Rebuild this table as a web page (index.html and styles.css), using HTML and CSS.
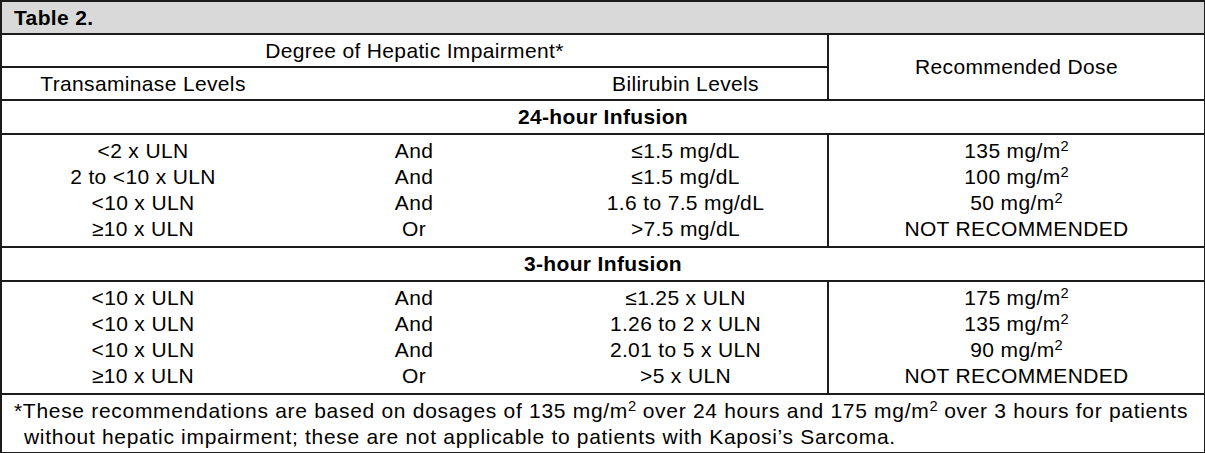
FILE: index.html
```html
<!DOCTYPE html>
<html>
<head>
<meta charset="utf-8">
<link rel="stylesheet" href="styles.css">
</head>
<body>
<table class="tbl">
  <colgroup>
    <col class="c1"><col class="c2"><col class="c3"><col class="c4">
  </colgroup>
  <tr class="title"><td colspan="4">Table 2.</td></tr>
  <tr class="hdr hdr1">
    <td colspan="3" class="center">Degree of Hepatic Impairment*</td>
    <td rowspan="2" class="center dose">Recommended Dose</td>
  </tr>
  <tr class="hdr hdr2">
    <td class="center">Transaminase Levels</td>
    <td></td>
    <td class="center">Bilirubin Levels</td>
  </tr>
  <tr class="sec"><td colspan="4">24-hour Infusion</td></tr>
  <tr class="row first"><td>&lt;2 x ULN</td><td>And</td><td>&le;1.5 mg/dL</td><td class="dose">135 mg/m<sup>2</sup></td></tr>
  <tr class="row"><td>2 to &lt;10 x ULN</td><td>And</td><td>&le;1.5 mg/dL</td><td class="dose">100 mg/m<sup>2</sup></td></tr>
  <tr class="row"><td>&lt;10 x ULN</td><td>And</td><td>1.6 to 7.5 mg/dL</td><td class="dose">50 mg/m<sup>2</sup></td></tr>
  <tr class="row last"><td>&ge;10 x ULN</td><td>Or</td><td>&gt;7.5 mg/dL</td><td class="dose">NOT RECOMMENDED</td></tr>
  <tr class="sec"><td colspan="4">3-hour Infusion</td></tr>
  <tr class="row first"><td>&lt;10 x ULN</td><td>And</td><td>&le;1.25 x ULN</td><td class="dose">175 mg/m<sup>2</sup></td></tr>
  <tr class="row"><td>&lt;10 x ULN</td><td>And</td><td>1.26 to 2 x ULN</td><td class="dose">135 mg/m<sup>2</sup></td></tr>
  <tr class="row"><td>&lt;10 x ULN</td><td>And</td><td>2.01 to 5 x ULN</td><td class="dose">90 mg/m<sup>2</sup></td></tr>
  <tr class="row last"><td>&ge;10 x ULN</td><td>Or</td><td>&gt;5 x ULN</td><td class="dose">NOT RECOMMENDED</td></tr>
  <tr class="foot"><td colspan="4"><p>*These recommendations are based on dosages of 135 mg/m<sup>2</sup> over 24 hours and 175 mg/m<sup>2</sup> over 3 hours for patients without hepatic impairment; these are not applicable to patients with Kaposi’s Sarcoma.</p></td></tr>
</table>
</body>
</html>
```
FILE: styles.css
```css
html, body {
  margin: 0;
  padding: 0;
  background: #fff;
}
.tbl {
  border-collapse: collapse;
  table-layout: fixed;
  width: 1204px;
  font-family: "Liberation Sans", Arial, sans-serif;
  font-size: 21px;
  letter-spacing: 0.35px;
  color: #000;
  border: 2px solid #1c1c1c;
}
.c1 { width: 283px; }
.c2 { width: 260px; }
.c3 { width: 284px; }
.c4 { width: 377px; }
.tbl td {
  padding: 0;
  vertical-align: middle;
}
.center { text-align: center; }
.title td {
  background: #d9d9d9;
  font-weight: bold;
  height: 31px;
  padding-left: 12px;
  border-bottom: 2px solid #1c1c1c;
}
.hdr td {
  border-bottom: 2px solid #1c1c1c;
}
.hdr1 td { height: 31px; }
.hdr2 td { height: 31px; }
.hdr td.dose, .row td.dose {
  border-left: 2px solid #1c1c1c;
}
.sec td {
  height: 32px;
  text-align: center;
  font-weight: bold;
  border-bottom: 2px solid #1c1c1c;
}
.row td {
  height: 26px;
  line-height: 26px;
  text-align: center;
}
.row.first td { padding-top: 3px; }
.row.last td {
  padding-bottom: 4px;
  border-bottom: 2px solid #1c1c1c;
}
sup {
  font-size: 0.7em;
  line-height: 0;
  vertical-align: 0.5em;
  letter-spacing: 0;
}
.foot td {
  height: 57px;
}
.foot p {
  margin: 0;
  padding-left: 22px;
  padding-right: 8px;
  text-indent: -10px;
  line-height: 26px;
  letter-spacing: 0.7px;
}
```
